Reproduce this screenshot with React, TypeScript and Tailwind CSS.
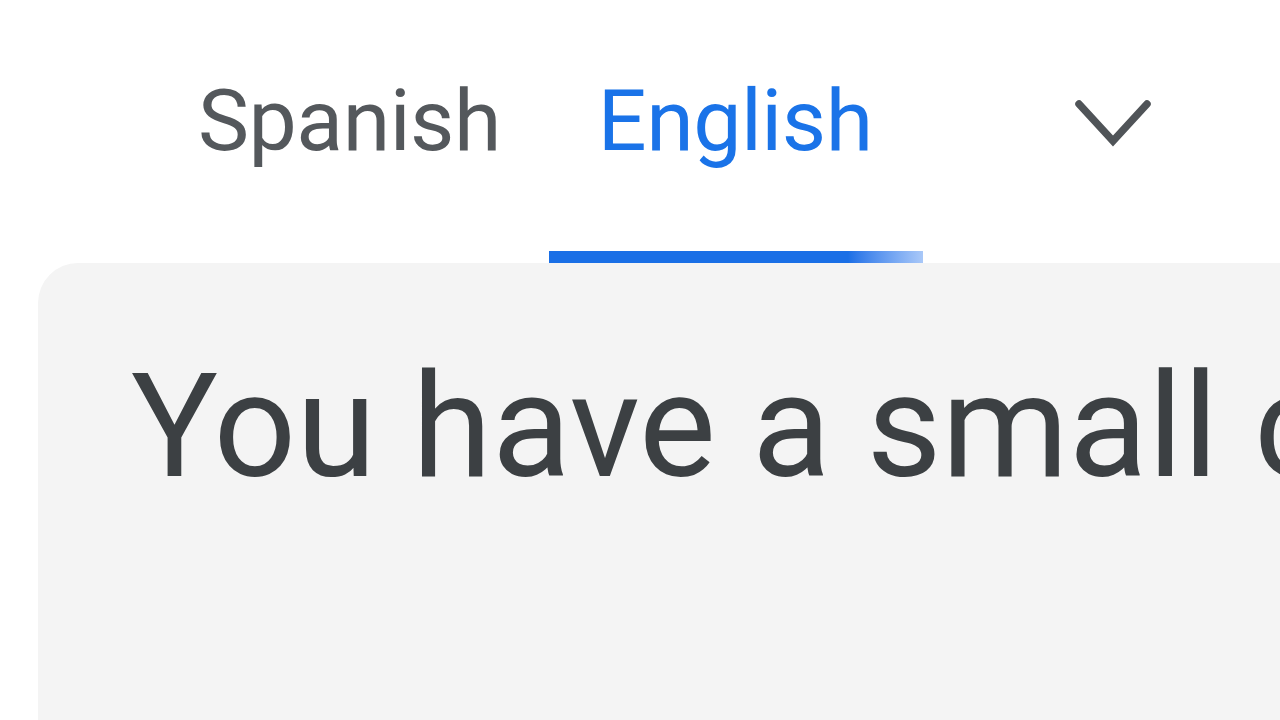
import React from "react";

const tabs = [
  { label: "Spanish", active: false, pad: "pl-[50px] pr-[48px]" },
  { label: "English", active: true, pad: "pl-[49px] pr-[50px]" },
];

function ChevronDown() {
  return (
    <svg width="80" height="50" viewBox="0 0 80 50" fill="none" aria-hidden="true">
      <polyline
        points="7,6 41,43 75,6"
        stroke="#505458"
        strokeWidth="7.5"
        strokeLinecap="round"
        strokeLinejoin="miter"
      />
    </svg>
  );
}

export default function App() {
  return (
    <div
      className="h-[720px] w-[1280px] overflow-hidden bg-white"
      style={{ fontFamily: "Roboto, 'Noto Sans', sans-serif" }}
    >
      {/* Language tabs */}
      <div className="flex items-start pl-[148px]">
        {tabs.map((tab) => (
          <div key={tab.label} className="flex flex-col">
            <span
              className={
                tab.pad +
                " pt-[71px] pb-[80px] text-[86px] leading-[100px] tracking-[-0.5px] whitespace-nowrap " +
                (tab.active ? "text-[#1a73e8]" : "text-[#54585c]")
              }
            >
              {tab.label}
            </span>
            <div
              className={
                "h-[12px] " +
                (tab.active
                  ? "bg-gradient-to-r from-[#1a6fe6] via-[#1a6fe6] via-80% to-[#a9c8f8]"
                  : "bg-transparent")
              }
            />
          </div>
        ))}
        <div className="ml-auto mr-[128px] mt-[98px]">
          <ChevronDown />
        </div>
      </div>

      {/* Source text panel */}
      <div className="ml-[38px] h-[480px] overflow-hidden rounded-tl-[40px] bg-[#f4f4f4] pl-[93px] pt-[76px]">
        <p className="whitespace-nowrap text-[145px] leading-[1.2] text-[#3c4043]">
          You have a small cut
        </p>
      </div>
    </div>
  );
}
